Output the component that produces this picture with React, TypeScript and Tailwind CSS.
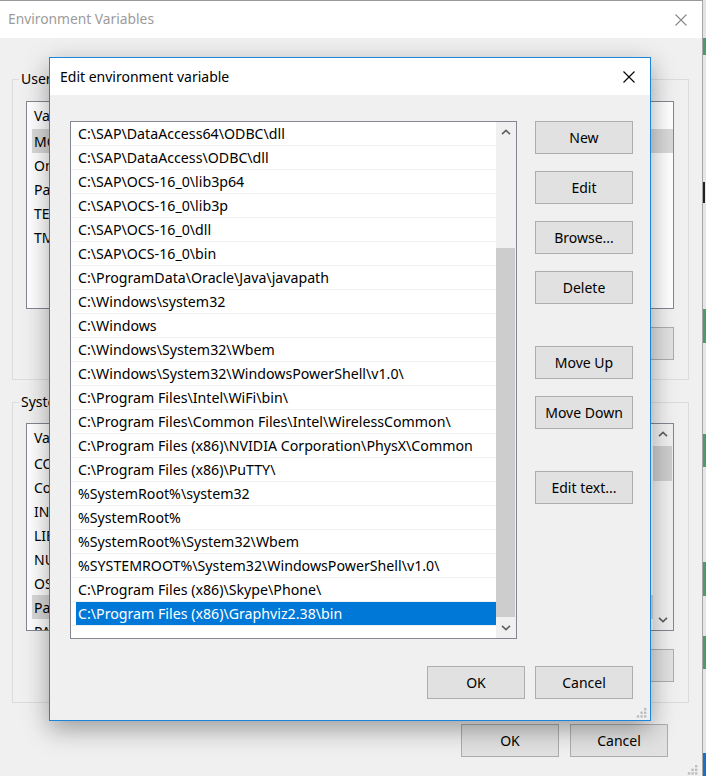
import React from "react";

const paths = [
  "C:\\SAP\\DataAccess64\\ODBC\\dll",
  "C:\\SAP\\DataAccess\\ODBC\\dll",
  "C:\\SAP\\OCS-16_0\\lib3p64",
  "C:\\SAP\\OCS-16_0\\lib3p",
  "C:\\SAP\\OCS-16_0\\dll",
  "C:\\SAP\\OCS-16_0\\bin",
  "C:\\ProgramData\\Oracle\\Java\\javapath",
  "C:\\Windows\\system32",
  "C:\\Windows",
  "C:\\Windows\\System32\\Wbem",
  "C:\\Windows\\System32\\WindowsPowerShell\\v1.0\\",
  "C:\\Program Files\\Intel\\WiFi\\bin\\",
  "C:\\Program Files\\Common Files\\Intel\\WirelessCommon\\",
  "C:\\Program Files (x86)\\NVIDIA Corporation\\PhysX\\Common",
  "C:\\Program Files (x86)\\PuTTY\\",
  "%SystemRoot%\\system32",
  "%SystemRoot%",
  "%SystemRoot%\\System32\\Wbem",
  "%SYSTEMROOT%\\System32\\WindowsPowerShell\\v1.0\\",
  "C:\\Program Files (x86)\\Skype\\Phone\\",
  "C:\\Program Files (x86)\\Graphviz2.38\\bin",
];

const userVars = ["MOZ_PLUGIN_PATH", "OneDrive", "Path", "TEMP", "TMP"];
const sysVars = ["COMPUTERNAME", "ComSpec", "INCLUDE", "LIB", "NUMBER_OF_PROCESSORS", "OS", "Path", "PATHEXT"];

function ChevUp() {
  return (
    <svg width="10" height="6" viewBox="0 0 10 6">
      <path d="M1 5.2 L5 1.4 L9 5.2" stroke="#606060" strokeWidth="1.6" fill="none" />
    </svg>
  );
}
function ChevDown() {
  return (
    <svg width="10" height="6" viewBox="0 0 10 6">
      <path d="M1 0.8 L5 4.6 L9 0.8" stroke="#606060" strokeWidth="1.6" fill="none" />
    </svg>
  );
}
function CloseX({ color }: { color: string }) {
  return (
    <svg width="12" height="12" viewBox="0 0 12 12">
      <path d="M0.5 0.5 L11.5 11.5 M11.5 0.5 L0.5 11.5" stroke={color} strokeWidth="1.1" fill="none" />
    </svg>
  );
}
function Grip() {
  return (
    <svg width="11" height="11" viewBox="0 0 11 11">
      <rect x="8" y="0" width="2.4" height="2.4" fill="#bdbdbd" />
      <rect x="4.4" y="3.6" width="2.4" height="2.4" fill="#bdbdbd" />
      <rect x="8" y="3.6" width="2.4" height="2.4" fill="#bdbdbd" />
      <rect x="0.8" y="7.2" width="2.4" height="2.4" fill="#bdbdbd" />
      <rect x="4.4" y="7.2" width="2.4" height="2.4" fill="#bdbdbd" />
      <rect x="8" y="7.2" width="2.4" height="2.4" fill="#bdbdbd" />
    </svg>
  );
}

function Btn({ label }: { label: string }) {
  return (
    <div className="h-[33px] w-[98px] shrink-0 bg-[#e1e1e1] border border-[#adadad] flex items-center justify-center text-black">
      {label}
    </div>
  );
}

function BgList({ items, selected, scroll }: { items: string[]; selected: number; scroll?: boolean }) {
  return (
    <div className="h-[208px] bg-white border border-[#828790] overflow-hidden flex">
      <div className="flex-1 flex flex-col">
        <div className="h-[27px] shrink-0 flex items-center pl-[7px]">
          <span className="w-[200px]">Variable</span>
          <span>Value</span>
        </div>
        {items.map((v, i) => (
          <div key={v} className="h-[24px] shrink-0 flex pl-[5px]">
            <div className={"flex-1 flex items-center pl-[2px] " + (i === selected ? "bg-[#d9d9d9]" : "")}>{v}</div>
          </div>
        ))}
      </div>
      {scroll && (
        <div className="w-[20px] bg-[#f0f0f0] flex flex-col">
          <div className="h-[20px] flex items-center justify-center"><ChevUp /></div>
          <div className="flex-1 pt-[2px] flex flex-col">
            <div className="h-[35px] mr-[1px] bg-[#cdcdcd]" />
          </div>
          <div className="h-[20px] flex items-center justify-center"><ChevDown /></div>
        </div>
      )}
    </div>
  );
}

export default function App() {
  return (
    <div className="w-[706px] h-[776px] relative overflow-hidden flex bg-[#f0f0f0] font-['Noto_Sans',sans-serif] text-[14px] text-black">
      {/* Background window */}
      <div className="w-[703px] h-full relative flex flex-col border-r border-[#a6a6a6] border-t border-t-[#9a9a9a] shrink-0">
        <div className="h-[37px] bg-white flex items-center justify-between pl-[8px] pr-[15px] shrink-0">
          <span className="text-[#9b9b9b] text-[13.8px]">Environment Variables</span>
          <CloseX color="#8a8a8a" />
        </div>
        <div className="flex-1 bg-[#f0f0f0] pl-[12px] pr-[13px] flex flex-col">
          <div className="mt-[41px] border border-[#dcdcdc] pl-[13px] pr-[14px] pb-[19px] flex flex-col">
            <div className="-mt-[11px] -ml-[7px] w-fit px-[2px] leading-[20px] bg-[#f0f0f0]">User variables for User</div>
            <div className="mt-[12px]">
              <BgList items={userVars} selected={0} />
            </div>
            <div className="mt-[18px] flex justify-end gap-[11px]">
              <Btn label="New..." />
              <Btn label="Edit..." />
              <Btn label="Delete" />
            </div>
          </div>
          <div className="mt-[22px] border border-[#dcdcdc] pl-[13px] pr-[14px] pb-[20px] flex flex-col">
            <div className="-mt-[11px] -ml-[7px] w-fit px-[2px] leading-[20px] bg-[#f0f0f0]">System variables</div>
            <div className="mt-[11px]">
              <BgList items={sysVars} selected={6} scroll />
            </div>
            <div className="mt-[18px] flex justify-end gap-[11px]">
              <Btn label="New..." />
              <Btn label="Edit..." />
              <Btn label="Delete" />
            </div>
          </div>
          <div className="mt-[21px] flex justify-end gap-[11px] pr-[21px]">
            <Btn label="OK" />
            <Btn label="Cancel" />
          </div>
        </div>
        <div className="absolute right-[4px] bottom-[0px]">
          <Grip />
        </div>
      </div>

      {/* Strip of another window at the right edge */}
      <div className="w-[3px] h-full flex flex-col bg-[#e6e6e6]">
        <div className="h-[38px] bg-[#e3e3e3]" />
        <div className="h-[17px] bg-[#4e9a6c]" />
        <div className="h-[127px]" />
        <div className="h-[21px] overflow-hidden relative">
          <div className="w-[2px] h-full bg-[#222]" />
        </div>
        <div className="h-[106px]" />
        <div className="h-[34px] bg-[#4e9a6c]" />
        <div className="h-[91px]" />
        <div className="h-[33px] bg-[#4e9a6c]" />
        <div className="h-[95px]" />
        <div className="h-[34px] bg-[#4e9a6c]" />
        <div className="h-[40px]" />
        <div className="h-[33px] bg-[#4e9a6c]" />
        <div className="h-[84px]" />
        <div className="flex-1 bg-[#1b6fc8]" />
      </div>

      {/* Front dialog */}
      <div className="absolute left-[49px] top-[57px] w-[602px] h-[664px] border border-[#1b84dc] bg-[#f0f0f0] shadow-[0_8px_24px_rgba(0,0,0,0.36)] flex flex-col">
        <div className="h-[37px] bg-white flex items-center justify-between pl-[10px] pr-[15px] shrink-0">
          <span className="text-[14px]">Edit environment variable</span>
          <CloseX color="#000" />
        </div>
        <div className="pl-[20px] pr-[17px] pt-[26px] flex flex-col">
          <div className="flex gap-[18px]">
            <div className="w-[447px] h-[518px] bg-white border border-[#828790] flex">
              <div className="flex-1 flex flex-col text-[14.2px]">
                {paths.map((p, i) => {
                  const sel = i === paths.length - 1;
                  return (
                    <div key={p} className="h-[24px] shrink-0 border-b border-[#f0f0f0] flex pl-[5px]">
                      <div className={"flex-1 flex items-center pl-[2px] pt-[1px] whitespace-nowrap " + (sel ? "bg-[#0078d7] text-white" : "")}>{p}</div>
                    </div>
                  );
                })}
              </div>
              <div className="w-[20px] bg-[#f0f0f0] flex flex-col">
                <div className="h-[20px] flex items-center justify-center"><ChevUp /></div>
                <div className="flex-1 pt-[106px] pb-[1px] flex flex-col">
                  <div className="flex-1 mr-[1px] bg-[#cdcdcd]" />
                </div>
                <div className="h-[20px] flex items-center justify-center"><ChevDown /></div>
              </div>
            </div>
            <div className="w-[98px] flex flex-col">
              <Btn label="New" />
              <div className="mt-[17px]"><Btn label="Edit" /></div>
              <div className="mt-[17px]"><Btn label="Browse..." /></div>
              <div className="mt-[17px]"><Btn label="Delete" /></div>
              <div className="mt-[42px]"><Btn label="Move Up" /></div>
              <div className="mt-[17px]"><Btn label="Move Down" /></div>
              <div className="mt-[42px]"><Btn label="Edit text..." /></div>
            </div>
          </div>
          <div className="mt-[27px] flex justify-end gap-[10px]">
            <Btn label="OK" />
            <Btn label="Cancel" />
          </div>
        </div>
        <div className="absolute right-[3px] bottom-[1px]">
          <Grip />
        </div>
      </div>
    </div>
  );
}
